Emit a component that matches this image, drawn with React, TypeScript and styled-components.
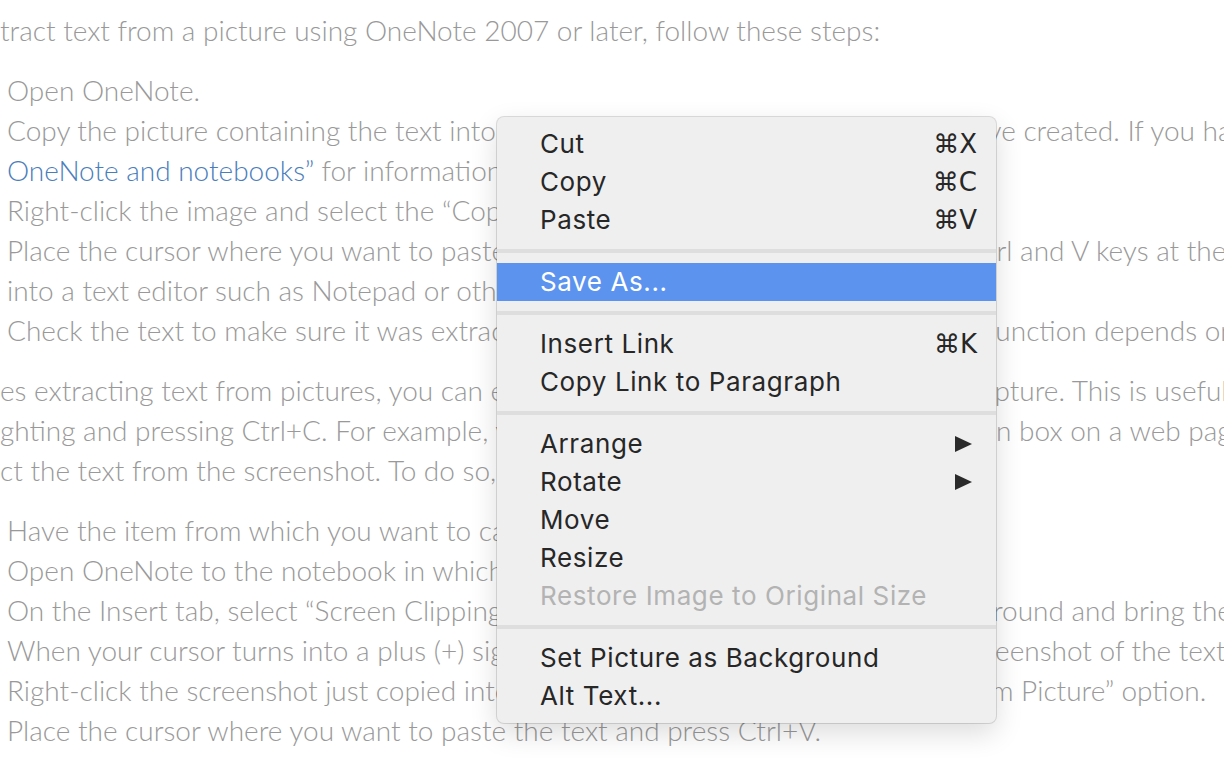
import React from 'react'
import styled, { createGlobalStyle } from 'styled-components'

const GlobalStyle = createGlobalStyle`
    html, body {
        margin: 0;
        padding: 0;
        background: #fff;
        overflow: hidden;
    }
`

const Page = styled.div`
    position: relative;
    width: 1224px;
    height: 758px;
    overflow: hidden;
    background: #fff;
    font-family: Lato, "Open Sans", sans-serif;
    font-weight: 300;
    font-size: 28px;
    line-height: 40px;
    color: #999;
    white-space: nowrap;
`
const Doc = styled.div`
    padding-top: 10px;
`
const Para = styled.p`
    margin: 0 0 20px;
`
const Steps = styled.ol`
    list-style: none;
    margin: 0 0 20px;
    padding: 0 0 0 7px;
`
const Step = styled.li`
    margin: 0;
`
const Link = styled.span`
    color: #4a7dbb;
`

/* context menu */
const Menu = styled.div`
    position: absolute;
    left: 497px;
    top: 117px;
    width: 499px;
    padding: 8px 0;
    background: #efefef;
    border-radius: 7px;
    box-shadow: 0 0 0 1px rgba(0, 0, 0, 0.13), 0 10px 28px rgba(0, 0, 0, 0.14);
    font-family: Inter, "DejaVu Sans", sans-serif;
    font-weight: 400;
    font-size: 26px;
    letter-spacing: 0.6px;
    line-height: 38px;
    white-space: nowrap;
    overflow: hidden;
`
interface RowProps {
    $active?: boolean
    $disabled?: boolean
}
const Row = styled.div<RowProps>`
    display: flex;
    align-items: center;
    height: 38px;
    padding: 0 19px 0 43px;
    background: ${p => p.$active ? '#5b93ee' : 'transparent'};
    color: ${p => p.$active ? '#fff' : p.$disabled ? '#b3b3b3' : '#272727'};
`
const Label = styled.span`
    flex: 1;
`
const Shortcut = styled.span`
    font-family: "DejaVu Sans", sans-serif;
    font-size: 26px;
    letter-spacing: 0;
`
const Arrow = styled.svg`
    width: 17px;
    height: 16px;
    margin-right: 5px;
    fill: #2a2a2a;
`
const Separator = styled.div`
    height: 4px;
    margin: 10px 0;
    background: #dedede;
`

interface IMenuItem {
    label: string
    shortcut?: string
    submenu?: boolean
    active?: boolean
    disabled?: boolean
}

const groups: IMenuItem[][] = [
    [
        { label: 'Cut', shortcut: '⌘X' },
        { label: 'Copy', shortcut: '⌘C' },
        { label: 'Paste', shortcut: '⌘V' },
    ],
    [{ label: 'Save As...', active: true }],
    [
        { label: 'Insert Link', shortcut: '⌘K' },
        { label: 'Copy Link to Paragraph' },
    ],
    [
        { label: 'Arrange', submenu: true },
        { label: 'Rotate', submenu: true },
        { label: 'Move' },
        { label: 'Resize' },
        { label: 'Restore Image to Original Size', disabled: true },
    ],
    [
        { label: 'Set Picture as Background' },
        { label: 'Alt Text...' },
    ],
]

const ContextMenu: React.FC = () => (
    <Menu>
        {groups.map((group, gi) => (
            <React.Fragment key={gi}>
                {gi > 0 && <Separator />}
                {group.map(item => (
                    <Row key={item.label} $active={item.active} $disabled={item.disabled}>
                        <Label>{item.label}</Label>
                        {item.shortcut && <Shortcut>{item.shortcut}</Shortcut>}
                        {item.submenu &&
                            <Arrow viewBox="0 0 17 16">
                                <path d="M0 0 L17 8 L0 16 Z" />
                            </Arrow>
                        }
                    </Row>
                ))}
            </React.Fragment>
        ))}
    </Menu>
)

const App: React.FC = () => (
    <Page>
        <GlobalStyle />
        <Doc>
            <Para>tract text from a picture using OneNote 2007 or later, follow these steps:</Para>
            <Steps>
                <Step>Open OneNote.</Step>
                <Step>Copy the picture containing the text into a page in a OneNote notebook that you’ve created. If you haven’t created a notebook</Step>
                <Step><Link>OneNote and notebooks”</Link> for information on how to create one.</Step>
                <Step>Right-click the image and select the “Copy Text from Picture” option.</Step>
                <Step>Place the cursor where you want to paste the extracted text and then press the Ctrl and V keys at the same time.</Step>
                <Step>into a text editor such as Notepad or other word processor.</Step>
                <Step>Check the text to make sure it was extracted correctly. The exact accuracy of the function depends on the quality of the picture.</Step>
            </Steps>
            <Para>
                es extracting text from pictures, you can extract text from a screen, or any other capture. This is useful when text can’t be copied by<br />
                ghting and pressing Ctrl+C. For example, you may wish to copy text from a selection box on a web page<br />
                ct the text from the screenshot. To do so, follow these steps:
            </Para>
            <Steps>
                <Step>Have the item from which you want to capture text open on your screen.</Step>
                <Step>Open OneNote to the notebook in which you want to paste the text.</Step>
                <Step>On the Insert tab, select “Screen Clipping.” OneNote will now move into the background and bring the</Step>
                <Step>When your cursor turns into a plus (+) sign, drag it over the entire area to get a screenshot of the text</Step>
                <Step>Right-click the screenshot just copied into OneNote, and select the “Copy Text from Picture” option.</Step>
                <Step>Place the cursor where you want to paste the text and press Ctrl+V.</Step>
                <Step>Check the text to make sure it was extracted correctly.</Step>
            </Steps>
        </Doc>
        <ContextMenu />
    </Page>
)

export default App
